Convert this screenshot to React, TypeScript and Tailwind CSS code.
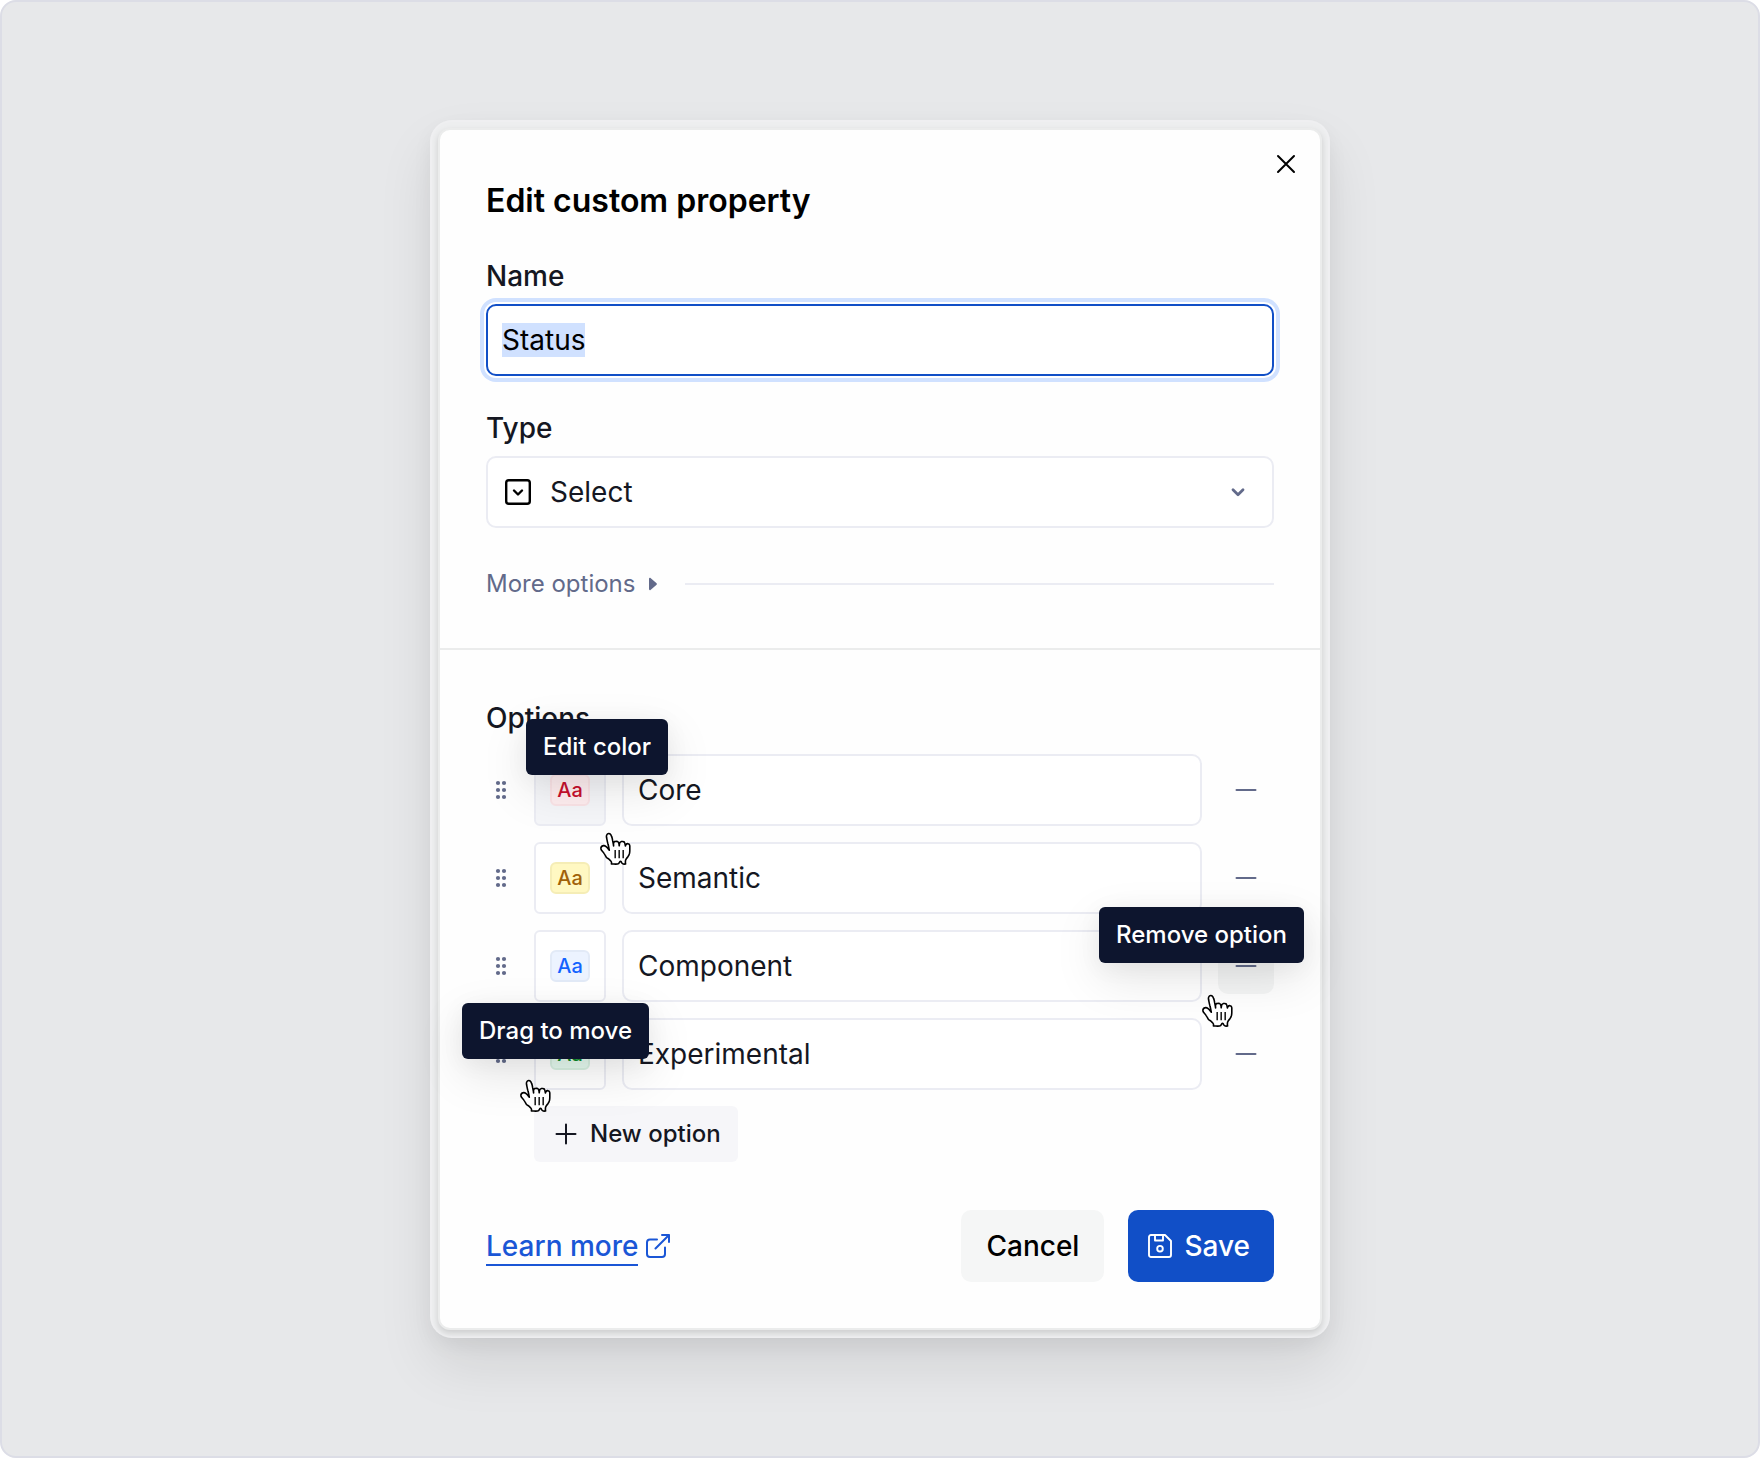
import { useEffect, useRef, type ReactNode } from "react";

type Option = {
  name: string;
  swatch: string;
  colorHovered?: boolean;
  removeHovered?: boolean;
  dragHovered?: boolean;
};

const options: Option[] = [
  { name: "Core", swatch: "bg-[#ffeef0] border-[#fbe4e7] text-[#c8102e]", colorHovered: true },
  { name: "Semantic", swatch: "bg-[#fff8c2] border-[#f5edb6] text-[#a1620a]" },
  { name: "Component", swatch: "bg-[#ecf3ff] border-[#e2eaf7] text-[#1463ff]", removeHovered: true },
  { name: "Experimental", swatch: "bg-[#e6faef] border-[#d8f0e2] text-[#0a8a2a]", dragHovered: true },
];

function HandCursor({ className }: { className: string }) {
  return (
    <svg className={`pointer-events-none absolute z-30 h-[34px] w-8 ${className}`} viewBox="8 7.1 16 17" aria-hidden="true">
      <path
        d="M11.3 20.4c-.3-.4-.6-1.1-1.2-2-.3-.5-1.2-1.5-1.5-1.9-.2-.4-.2-.6-.1-1 .1-.6.7-1.1 1.4-1.1.5 0 1 .4 1.4.7.2.2.5.6.7.8.2.2.2.3.4.5.2.3.3.5.2.1-.1-.5-.2-1.3-.4-2.1-.1-.6-.2-.7-.3-1.1-.1-.5-.2-.8-.3-1.3-.1-.3-.2-1.1-.3-1.5-.1-.5-.1-1.4.3-1.8.3-.3.9-.4 1.3-.2.5.3.8 1 .9 1.3.2.5.4 1.2.5 2 .2 1 .5 2.5.5 2.8 0-.4-.1-1.1 0-1.5.1-.3.3-.7.7-.8.3-.1.6-.1.9-.1.3.1.6.3.8.5.4.6.4 1.9.4 1.8.1-.4.1-1.2.3-1.6.1-.2.5-.4.7-.5.3-.1.7-.1 1 0 .2 0 .6.3.7.5.2.3.3 1.3.4 1.7 0 .1.1-.4.3-.7.4-.6 1.8-.8 1.9.6v2.3c0 .4-.1 1.3-.2 1.7-.1.3-.4 1-.7 1.4 0 0-1.1 1.2-1.2 1.8-.1.6-.1.6-.1 1s.1.9.1.9-.8.1-1.2 0c-.4-.1-.9-.8-1-1.1-.2-.3-.5-.3-.7 0-.2.4-.7 1.1-1.1 1.1-.7.1-2.1 0-3.1 0 0 0 .2-1-.2-1.4-.3-.3-.8-.8-1.1-1.1z"
        fill="#fff"
        stroke="#000"
        strokeWidth=".8"
        strokeLinejoin="round"
      />
      <path d="M15.6 16.6v4.1M17.6 16.6v4.1M19.6 16.6v4.1" stroke="#222" strokeWidth=".8" />
    </svg>
  );
}

function Tooltip({ className, children }: { className: string; children: ReactNode }) {
  return (
    <span
      role="tooltip"
      className={`pointer-events-none absolute z-20 flex h-14 items-center rounded-md bg-[#0d152e] px-[17px] text-2xl font-medium whitespace-nowrap text-white shadow-[0_16px_48px_rgba(0,0,0,0.10),0_4px_24px_rgba(0,0,0,0.05)] ${className}`}
    >
      {children}
    </span>
  );
}

function OptionRow({ option }: { option: Option }) {
  return (
    <li className="flex items-center gap-4">
      <div className="relative flex">
        <button type="button" aria-label={`Drag ${option.name} to move`} className="flex h-14 w-8 items-center justify-center">
          <svg className="h-5 w-6" viewBox="0 0 24 20" fill="#626a8a" aria-hidden="true">
            {[3, 10, 17].map((y) => (
              <g key={y}>
                <circle cx="8" cy={y} r="2.1" />
                <circle cx="14" cy={y} r="2.1" />
              </g>
            ))}
          </svg>
        </button>
        {option.dragHovered && (
          <>
            <Tooltip className="-top-[23px] -left-6">Drag to move</Tooltip>
            <HandCursor className="top-[52px] left-[34px]" />
          </>
        )}
      </div>
      <div className="relative flex">
        <button
          type="button"
          aria-label={`Edit color of ${option.name}`}
          className={`flex size-[72px] items-center justify-center rounded-md border-2 border-[#ebecf3] ${option.colorHovered ? "bg-[#f5f6f9]" : "bg-white"}`}
        >
          <span className={`flex h-8 w-10 items-center justify-center rounded-md border-2 text-xl font-medium ${option.swatch}`}>Aa</span>
        </button>
        {option.colorHovered && (
          <>
            <Tooltip className="-top-[35px] -left-2">Edit color</Tooltip>
            <HandCursor className="top-[77px] left-[66px]" />
          </>
        )}
      </div>
      <input
        type="text"
        aria-label="Option name"
        defaultValue={option.name}
        className="h-[72px] min-w-0 flex-1 rounded-[10px] border-2 border-[#ebecf3] bg-white px-3.5 text-[28px] leading-10 text-[#151722] outline-none"
      />
      <div className="relative flex">
        <button
          type="button"
          aria-label={`Remove ${option.name}`}
          className={`flex size-14 items-center justify-center rounded-[10px] ${option.removeHovered ? "bg-[#f4f5f5]" : ""}`}
        >
          <svg className="size-6" viewBox="0 0 24 24" fill="none" stroke="#626a8a" strokeWidth="2" strokeLinecap="round" aria-hidden="true">
            <path d="M2.5 12h19" />
          </svg>
        </button>
        {option.removeHovered && (
          <>
            <Tooltip className="-top-[31px] -right-[30px]">Remove option</Tooltip>
            <HandCursor className="top-[55px] -left-4" />
          </>
        )}
      </div>
    </li>
  );
}

export default function App() {
  const nameRef = useRef<HTMLInputElement>(null);

  useEffect(() => {
    nameRef.current?.focus();
    nameRef.current?.select();
  }, []);

  return (
    <main className="flex min-h-screen items-center justify-center rounded-2xl border-2 border-[#dcdde6] bg-[#e7e8ea] font-['Inter',sans-serif] text-[#151722]">
      <div className="w-full max-w-[900px] rounded-[22px] border-2 border-white/10 bg-white/25 p-1.5 shadow-[0_28px_56px_rgba(0,0,0,0.09),0_8px_20px_rgba(0,0,0,0.05)]">
        <form
          role="dialog"
          aria-labelledby="dialog-title"
          onSubmit={(e) => e.preventDefault()}
          className="relative rounded-xl border-2 border-[#ebecec] bg-[#fefefe] shadow-[0_3px_6px_rgba(0,0,0,0.14)]"
        >
          <button type="button" aria-label="Close" className="absolute top-[18px] right-[18px] flex size-8 items-center justify-center text-black">
            <svg className="size-6" viewBox="0 0 24 24" fill="none" stroke="currentColor" strokeWidth="2" strokeLinecap="round" aria-hidden="true">
              <path d="M4 4l16 16M20 4 4 20" />
            </svg>
          </button>

          <section className="px-[46px] pt-[46px] pb-12">
            <h1 id="dialog-title" className="text-[32px] leading-[50px] font-semibold text-black">
              Edit custom property
            </h1>

            <div className="mt-[30px] flex flex-col gap-2">
              <label htmlFor="name" className="text-[28px] leading-10 font-medium">
                Name
              </label>
              <input
                id="name"
                ref={nameRef}
                type="text"
                defaultValue="Status"
                className="h-[72px] w-full rounded-[10px] border-2 border-[#114fc7] bg-white px-3.5 text-[28px] leading-10 text-black shadow-[0_0_0_2px_#fff,0_0_0_6px_#d0e1ff] outline-none selection:bg-[#d0e1fffd] selection:text-black"
              />
            </div>

            <div className="mt-8 flex flex-col gap-2">
              <label htmlFor="type" className="text-[28px] leading-10 font-medium">
                Type
              </label>
              <div className="relative">
                <select
                  id="type"
                  className="block h-[72px] w-full appearance-none rounded-[10px] border-2 border-[#ebecf3] bg-white pr-16 pl-[62px] text-[28px] leading-10 outline-none"
                >
                  <option>Select</option>
                </select>
                <svg
                  className="pointer-events-none absolute top-5 left-4 size-8"
                  viewBox="0 0 32 32"
                  fill="none"
                  stroke="#000"
                  strokeWidth="2.4"
                  strokeLinecap="round"
                  strokeLinejoin="round"
                  aria-hidden="true"
                >
                  <rect x="4.2" y="4.2" width="23.6" height="23.6" rx="2.6" />
                  <path d="M12 14.5l4 4 4-4" />
                </svg>
                <svg
                  className="pointer-events-none absolute top-6 right-6 size-6"
                  viewBox="0 0 24 24"
                  fill="none"
                  stroke="#626a8a"
                  strokeWidth="2.8"
                  strokeLinecap="round"
                  strokeLinejoin="round"
                  aria-hidden="true"
                >
                  <path d="M7 9.8l5 5 5-5" />
                </svg>
              </div>
            </div>

            <div className="mt-10 flex items-center gap-[25px]">
              <button type="button" aria-expanded="false" className="flex items-center gap-[13px] text-2xl leading-8 text-[#626a8a]">
                More options
                <svg className="h-4 w-3" viewBox="0 0 12 16" fill="currentColor" aria-hidden="true">
                  <path d="M1 2.7c0-.8 1-1.1 1.5-.6L8.6 7.3c.4.4.4 1 0 1.4L2.5 13.9C2 14.4 1 14.1 1 13.3z" />
                </svg>
              </button>
              <hr className="flex-1 border-t-2 border-[#ebecf3]" />
            </div>
          </section>

          <section className="border-t-2 border-[#ebecec] px-[46px] pt-12 pb-[46px]">
            <h2 className="text-[28px] leading-10 font-medium">Options</h2>
            <ul className="mt-4 flex flex-col gap-4">
              {options.map((option) => (
                <OptionRow key={option.name} option={option} />
              ))}
            </ul>
            <button type="button" className="mt-4 ml-12 flex h-14 items-center gap-3 rounded-md bg-[#f6f6f9] pr-[17px] pl-5 text-2xl font-medium">
              <svg className="size-6" viewBox="0 0 24 24" fill="none" stroke="currentColor" strokeWidth="2" strokeLinecap="round" aria-hidden="true">
                <path d="M12 2.5v19M2.5 12h19" />
              </svg>
              New option
            </button>

            <footer className="mt-12 flex items-center justify-between">
              <a href="#learn-more" className="flex items-center gap-2 text-[28px] leading-9 font-medium text-[#1a56d6]">
                <span className="border-y-2 border-t-transparent border-b-[#1a56d6]">Learn more</span>
                <svg
                  className="size-6"
                  viewBox="0 0 24 24"
                  fill="none"
                  stroke="currentColor"
                  strokeWidth="2"
                  strokeLinecap="round"
                  strokeLinejoin="round"
                  aria-hidden="true"
                >
                  <path d="M11 5.5H4a3 3 0 0 0-3 3V20a3 3 0 0 0 3 3h12a3 3 0 0 0 3-3v-6.5" />
                  <path d="M9.5 14.5 23 1M16 1h7v7" />
                </svg>
              </a>
              <div className="flex gap-6">
                <button type="button" className="h-[72px] rounded-[10px] bg-[#f5f6f6] px-[25px] text-[28px] leading-10 font-medium text-black">
                  Cancel
                </button>
                <button type="submit" className="flex h-[72px] items-center gap-3 rounded-[10px] bg-[#114fc7] pr-6 pl-5 text-[28px] leading-10 font-medium text-white">
                  <svg className="size-6" viewBox="0 0 24 24" fill="none" stroke="currentColor" strokeWidth="1.9" strokeLinejoin="round" aria-hidden="true">
                    <path d="M3 1h14l6 6v14a2 2 0 0 1-2 2H3a2 2 0 0 1-2-2V3a2 2 0 0 1 2-2z" />
                    <path d="M7 1v5.5h8V1" />
                    <circle cx="12" cy="14.7" r="2.8" />
                  </svg>
                  Save
                </button>
              </div>
            </footer>
          </section>
        </form>
      </div>
    </main>
  );
}
